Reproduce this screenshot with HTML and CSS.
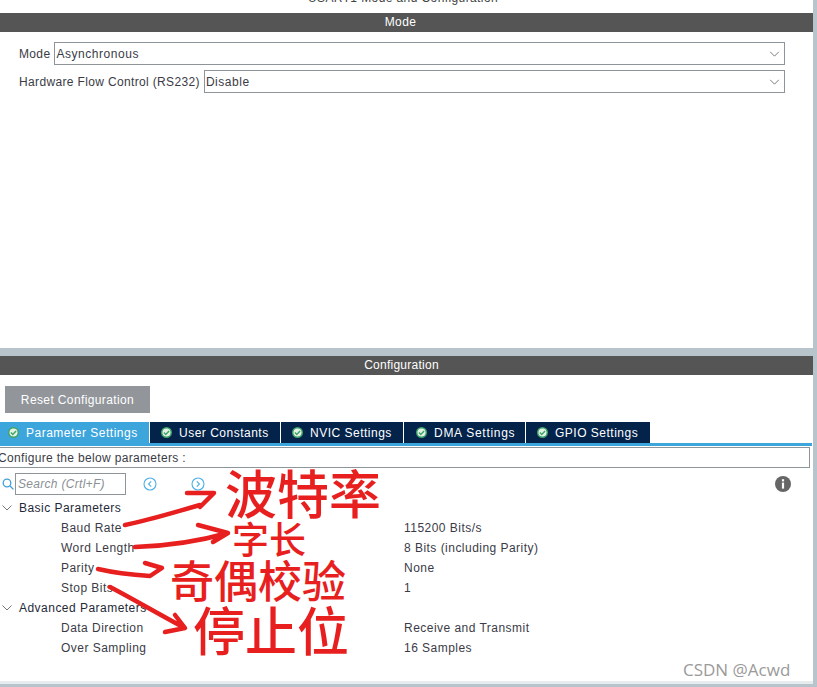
FILE: index.html
```html
<!DOCTYPE html>
<html lang="en">
<head>
<meta charset="utf-8">
<title>USART1 Mode and Configuration</title>
<link rel="stylesheet" href="styles.css">
</head>
<body>
<div class="app">
  <main class="main">
    <section class="mode-panel">
      <div class="title">USART1 Mode and Configuration</div>
      <div class="bar">Mode</div>
      <div class="mode-form">
        <div class="form-row">
          <span class="form-label">Mode</span>
          <div class="select"><span class="select-value">Asynchronous</span>
            <svg class="chev" viewBox="0 0 12 7"><path d="M1 1l5 5 5-5"/></svg></div>
        </div>
        <div class="form-row">
          <span class="form-label">Hardware Flow Control (RS232)</span>
          <div class="select"><span class="select-value">Disable</span>
            <svg class="chev" viewBox="0 0 12 7"><path d="M1 1l5 5 5-5"/></svg></div>
        </div>
      </div>
    </section>
    <div class="splitter"></div>
    <section class="config-panel">
      <div class="bar bar-config">Configuration</div>
      <button class="reset">Reset Configuration</button>
      <nav class="tabs">
        <div class="tab tab-active tab-1"><svg class="ok" viewBox="0 0 12 12"><circle cx="6" cy="6" r="5.2"/><path d="M3.2 6.1l2 2 3.6-3.8"/></svg>Parameter Settings</div>
        <div class="tab tab-2"><svg class="ok" viewBox="0 0 12 12"><circle cx="6" cy="6" r="5.2"/><path d="M3.2 6.1l2 2 3.6-3.8"/></svg>User Constants</div>
        <div class="tab tab-3"><svg class="ok" viewBox="0 0 12 12"><circle cx="6" cy="6" r="5.2"/><path d="M3.2 6.1l2 2 3.6-3.8"/></svg>NVIC Settings</div>
        <div class="tab tab-4"><svg class="ok" viewBox="0 0 12 12"><circle cx="6" cy="6" r="5.2"/><path d="M3.2 6.1l2 2 3.6-3.8"/></svg>DMA Settings</div>
        <div class="tab tab-5"><svg class="ok" viewBox="0 0 12 12"><circle cx="6" cy="6" r="5.2"/><path d="M3.2 6.1l2 2 3.6-3.8"/></svg>GPIO Settings</div>
      </nav>
      <div class="configure">Configure the below parameters :</div>
      <div class="search-row">
        <svg class="search-icon" viewBox="0 0 12 12"><circle cx="5" cy="5" r="3.8"/><path d="M8 8l3.4 3.4"/></svg>
        <div class="search-box">Search (Crtl+F)</div>
        <svg class="nav-icon nav-prev" viewBox="0 0 14 14"><circle cx="7" cy="7" r="6"/><path d="M8.2 4.4L5.6 7l2.6 2.6"/></svg>
        <svg class="nav-icon nav-next" viewBox="0 0 14 14"><circle cx="7" cy="7" r="6"/><path d="M5.8 4.4L8.4 7l-2.6 2.6"/></svg>
        <svg class="info" viewBox="0 0 16 16"><circle cx="8" cy="8" r="8"/><rect x="6.9" y="6.6" width="2.2" height="6" fill="#fff"/><rect x="6.9" y="3.2" width="2.2" height="2.2" fill="#fff"/></svg>
      </div>
      <div class="tree">
        <div class="group"><svg class="tree-chev" viewBox="0 0 10 6"><path d="M.5.5L5 5 9.500.5"/></svg>Basic Parameters</div>
        <div class="param"><span class="param-name">Baud Rate</span><span>115200 Bits/s</span></div>
        <div class="param"><span class="param-name">Word Length</span><span>8 Bits (including Parity)</span></div>
        <div class="param"><span class="param-name">Parity</span><span>None</span></div>
        <div class="param"><span class="param-name">Stop Bits</span><span>1</span></div>
        <div class="group"><svg class="tree-chev" viewBox="0 0 10 6"><path d="M.5.5L5 5 9.500.5"/></svg>Advanced Parameters</div>
        <div class="param"><span class="param-name">Data Direction</span><span>Receive and Transmit</span></div>
        <div class="param"><span class="param-name">Over Sampling</span><span>16 Samples</span></div>
      </div>
    </section>
  </main>
</div>

<svg class="ink" viewBox="0 0 817 687">
  <path d="M125 525C150 520 175 512 200 505M187 493H214L200 507"/>
  <path d="M135 547C165 546 200 541 228 533M198 525L228 533L213 542"/>
  <path d="M98 569C115 573 135 575 150 576L162 568L145 563"/>
  <path d="M110 587C135 600 160 615 183 627M175 615L185 628L165 632"/>
</svg>
<span class="hand hand-1">波特率</span>
<span class="hand hand-2">字长</span>
<span class="hand hand-3">奇偶校验</span>
<span class="hand hand-4">停止位</span>
<span class="watermark">CSDN @Acwd</span>
</body>
</html>
```
FILE: styles.css
```css
* { box-sizing: border-box; }
html, body { margin: 0; padding: 0; }
body {
  width: 817px;
  height: 687px;
  overflow: hidden;
  position: relative;
  background: #b8c4cb;
  font-family: "Liberation Sans", Arial, sans-serif;
  font-size: 12px;
  letter-spacing: .4px;
  color: #3b3b46;
}
.app { width: 813px; height: 684px; background: #fff; border-bottom: 3px solid #e9ecee; }
.main { display: flex; flex-direction: column; height: 100%; }

.mode-panel { height: 348px; padding-top: 13px; position: relative; flex: none; }
.title {
  position: absolute;
  top: -9px;
  left: 0;
  width: 806px;
  text-align: center;
  line-height: 14px;
  color: #444;
}
.bar {
  height: 19px;
  line-height: 19px;
  background: #545554;
  color: #fff;
  text-align: center;
  padding-right: 12px;
}
.bar-config { letter-spacing: .25px; padding-right: 10px; }
.mode-form {
  display: flex;
  flex-direction: column;
  gap: 5px;
  padding: 10px 28px 0 19px;
}
.form-row { display: flex; align-items: center; gap: 4px; height: 23px; }
.form-label { white-space: nowrap; letter-spacing: .35px; }
.select {
  flex: 1;
  height: 23px;
  border: 1px solid #8d959b;
  padding-left: 1px;
  line-height: 21px;
  display: flex;
  align-items: center;
  justify-content: space-between;
}
.select-value { padding-top: 1px; letter-spacing: .55px; }
.chev { width: 11px; height: 6px; margin-right: 4px; fill: none; stroke: #666; stroke-width: 1; }
.splitter { height: 8px; background: #b8c4cb; flex: none; }

.config-panel { flex: 1; position: relative; }
.reset {
  display: block;
  margin: 11px 0 0 5px;
  width: 145px;
  height: 27px;
  border: 0;
  padding: 0;
  background: #92969b;
  color: #fff;
  font: inherit;
  letter-spacing: .38px;
}
.tabs {
  display: flex;
  gap: 1px;
  height: 24px;
  margin-top: 9px;
  border-bottom: 3px solid #3ca5dc;
  margin-right: 1px;
}
.tab {
  height: 21px;
  background: #03234b;
  color: #fff;
  display: flex;
  align-items: center;
  padding-left: 12px;
  letter-spacing: .5px;
  white-space: nowrap;
}
.tab-active { background: #3ca5dc; padding-left: 8px; }
.tab-1 { width: 149px; }
.tab-2 { width: 130px; padding-left: 11px; }
.tab-3 { width: 122px; padding-left: 11px; }
.tab-4 { width: 121px; letter-spacing: .72px; }
.tab-5 { width: 124px; padding-left: 11px; }
.ok { width: 11px; height: 11px; margin-right: 7px; flex: none; }
.ok circle { fill: #e4f2e6; stroke: #3fa468; stroke-width: 1.6; }
.ok path { fill: none; stroke: #3fa468; stroke-width: 1.6; }
.configure {
  height: 21px;
  margin: 1px 3px 0 -2px;
  border-top: 1px solid #8d959b;
  border-bottom: 1px solid #8d959b;
  border-right: 1px solid #8d959b;
  line-height: 20px;
  letter-spacing: .33px;
  white-space: nowrap;
}
.search-row { display: flex; align-items: center; height: 22px; margin-top: 5px; padding-left: 2px; }
.search-icon { width: 12px; height: 12px; fill: none; stroke: #3f9fd8; stroke-width: 1.3; flex: none; }
.search-box {
  width: 111px;
  height: 22px;
  margin-left: 1px;
  border: 1px solid #8d959b;
  padding-left: 2px;
  line-height: 20px;
  font-style: italic;
  color: #8a8f94;
  letter-spacing: .3px;
}
.nav-icon { width: 14px; height: 14px; fill: none; stroke: #4bb0e6; stroke-width: 1.1; flex: none; }
.nav-prev { margin-left: 17px; }
.nav-next { margin-left: 34px; }
.info { width: 16px; height: 16px; fill: #666; margin-left: auto; margin-right: 22px; flex: none; }
.tree { margin-top: 3px; letter-spacing: .47px; }
.group, .param { height: 20px; line-height: 20px; white-space: nowrap; }
.group { display: flex; align-items: center; padding-left: 2px; color: #1f2a38; }
.tree-chev { width: 10px; height: 6px; margin-right: 7px; fill: none; stroke: #777; stroke-width: 1; }
.param { display: flex; padding-left: 61px; }
.param-name { width: 343px; }

.ink {
  position: absolute;
  inset: 0;
  width: 817px;
  height: 687px;
  fill: none;
  stroke: #e81f1f;
  stroke-width: 4.5;
  stroke-linecap: round;
  stroke-linejoin: round;
}
.hand {
  position: absolute;
  font-family: "Noto Sans CJK SC", sans-serif;
  font-weight: 500;
  color: #e81f1f;
  letter-spacing: 0;
  white-space: nowrap;
  line-height: 1;
}
.hand-1 { left: 225px; top: 466px; font-size: 52px; }
.hand-2 { left: 232px; top: 520px; font-size: 37px; }
.hand-3 { left: 170px; top: 557px; font-size: 44px; }
.hand-4 { left: 193px; top: 603px; font-size: 52px; }
.watermark {
  position: absolute;
  left: 683px;
  top: 658px;
  font-family: "Open Sans", sans-serif;
  font-size: 17px;
  letter-spacing: 0;
  color: #9a9a9a;
}
```
